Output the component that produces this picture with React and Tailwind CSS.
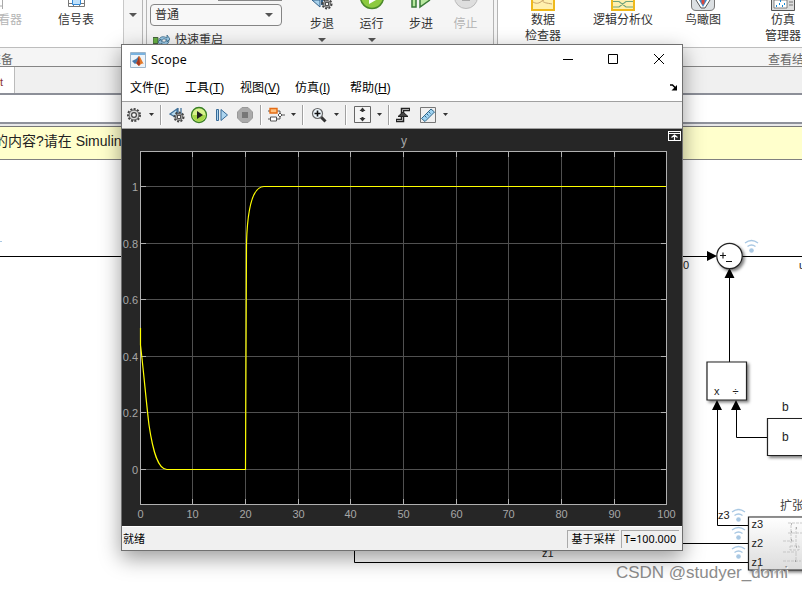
/**
 * Simulink editor with a floating Scope window
 */
import React from 'react';

const X_TICKS = [0, 10, 20, 30, 40, 50, 60, 70, 80, 90, 100];
const X_POS = [140, 192, 245, 298, 350, 403, 456, 508, 561, 614, 666];
const Y_TICKS = [
  { label: '1', y: 186 },
  { label: '0.8', y: 243 },
  { label: '0.6', y: 299 },
  { label: '0.4', y: 356 },
  { label: '0.2', y: 412 },
  { label: '0', y: 469 },
];

const MENUS = [
  { label: '文件', key: 'F' },
  { label: '工具', key: 'T' },
  { label: '视图', key: 'V' },
  { label: '仿真', key: 'I' },
  { label: '帮助', key: 'H' },
];

function Caret({ className = '' }) {
  return (
    <svg width="8" height="4" viewBox="0 0 8 4" className={className}>
      <path d="M0 0h8L4 4z" fill="#555" />
    </svg>
  );
}

function MiniCaret({ className = '' }) {
  return (
    <svg width="5" height="3" viewBox="0 0 5 3" className={className}>
      <path d="M0 0h5L2.5 3z" fill="#333" />
    </svg>
  );
}

function Gear({ cx, cy, r }) {
  return (
    <g>
      <circle cx={cx} cy={cy} r={r} fill="none" stroke="#444" strokeWidth="2" strokeDasharray="2 1.4" />
      <circle cx={cx} cy={cy} r={r - 1} fill="#d5d5d5" stroke="#555" strokeWidth="1" />
      <circle cx={cx} cy={cy} r={r * 0.4} fill="#f8f8f8" stroke="#444" strokeWidth="1.2" />
    </g>
  );
}

function SignalTableIcon() {
  return (
    <svg width="17" height="7" viewBox="0 0 17 7">
      <path d="M.5 0v6.500h16V0M0 3.500h17M5.500 0v7M11.500 0v7" fill="#fff" stroke="#777" />
      <path d="M4.500 0v4.500h8V0" fill="#bfe0fa" stroke="#3389d6" />
    </svg>
  );
}

function StepBackIcon() {
  return (
    <svg width="22" height="10" viewBox="0 0 22 10">
      <path d="M1 0l8 7V0z" fill="#a8d2ed" stroke="#35638a" />
      <path d="M11 0v5" stroke="#35638a" strokeWidth="2" />
      <Gear cx={16} cy={4} r={4.5} />
    </svg>
  );
}

function RunIcon() {
  return (
    <svg width="24" height="10" viewBox="0 0 24 10">
      <circle cx="12" cy="-3" r="11.500" fill="#8dca3f" stroke="#4b882b" strokeWidth="1.500" />
      <path d="M9 0v4l7-4z" fill="#fff" />
    </svg>
  );
}

function StepForwardIcon() {
  return (
    <svg width="22" height="10" viewBox="0 0 22 10">
      <path d="M2 0v7h4V0M10 0v7l10-7" fill="#b9e8a0" stroke="#397a37" strokeWidth="1.500" />
    </svg>
  );
}

function StopIcon() {
  return (
    <svg width="24" height="10" viewBox="0 0 24 10">
      <circle cx="12" cy="-3" r="11.500" fill="#dedede" stroke="#bbb" />
      <path d="M8 0h8" stroke="#aaa" strokeWidth="2" />
    </svg>
  );
}

function InspectorIcon() {
  return (
    <svg width="24" height="11" viewBox="0 0 24 11">
      <path d="M1 0v10h22V0" fill="#fff0ae" stroke="#efb91c" strokeWidth="2" />
      <path d="M2 2c5 3 7 0 11-2M11 0c1 3 5 3 10 4" fill="none" stroke="#c8a46c" />
    </svg>
  );
}

function AnalyzerIcon() {
  return (
    <svg width="24" height="11" viewBox="0 0 24 11">
      <path d="M1 0v10h22V0" fill="#fff0ae" stroke="#efb91c" strokeWidth="2" />
      <path d="M2 1.500h6L15 7h7M2 7h6l7-5.500h7" fill="none" stroke="#71a37b" strokeWidth="1.200" />
    </svg>
  );
}

function BirdIcon() {
  return (
    <svg width="24" height="11" viewBox="0 0 24 11">
      <path d="M.5 0v6q0 4.500 4.500 4.500h14q4.500 0 4.500-4.500V0" fill="#dce0e3" stroke="#777" />
      <path d="M5 0l5 8h4l5-8" fill="#fff" stroke="#555" />
      <path d="M8 0l4 7 4-7" fill="#3d8ccb" />
      <path d="M10.500 0h3v3L12 5l-1.500-2z" fill="#d7483e" />
    </svg>
  );
}

function ManagerIcon() {
  return (
    <svg width="24" height="11" viewBox="0 0 24 11">
      <path d="M.5 0v10.500h23V0" fill="#ddd" stroke="#555" />
      <path d="M3 0h13v8H3z" fill="#fff" stroke="#555" strokeWidth=".7" />
      <path d="M5 6h1M8 4h1M11 6h1M13 4h1M9 1h1" stroke="#1688d6" strokeWidth="2" />
      <path d="M18 2h4M18 5h4" stroke="#777" />
    </svg>
  );
}

const RUN_BUTTONS = [
  { label: '步退', Icon: StepBackIcon, caret: true, cls: 'w-[50px] text-[#333]' },
  { label: '运行', Icon: RunIcon, caret: true, cls: 'w-[49px] text-[#333]' },
  { label: '步进', Icon: StepForwardIcon, cls: 'w-[50px] text-[#333]' },
  { label: '停止', Icon: StopIcon, cls: 'w-[39px] text-[#b5b5b5]' },
];

const RESULT_BUTTONS = [
  { lines: ['数据', '检查器'], Icon: InspectorIcon },
  { lines: ['逻辑分析仪'], Icon: AnalyzerIcon },
  { lines: ['鸟瞰图'], Icon: BirdIcon },
  { lines: ['仿真', '管理器'], Icon: ManagerIcon },
];

function Ribbon() {
  return (
    <div className="h-[67px] shrink-0 border-b border-[#858585] bg-[#f5f5f5] text-xs leading-4 text-[#333]">
      <div className="flex h-[48px] border-b border-[#bdbdbd] whitespace-nowrap">
        <div className="flex w-[124px] shrink-0 border-r border-[#c8c8c8] bg-white">
          <div className="w-[36px] text-[#b5b5b5]">
            <svg width="8" height="12" viewBox="0 0 8 12">
              <path d="M2.500 0v9M0 6h3" stroke="#aaa" />
            </svg>
            <div className="-ml-[2px]">看器</div>
          </div>
          <div className="flex w-[80px] flex-col items-center">
            <div className="h-[12px]"><SignalTableIcon /></div>
            <span>信号表</span>
          </div>
        </div>
        <div className="flex w-[19px] shrink-0 justify-center border-r border-[#b5b5b5] pt-[13px]">
          <Caret />
        </div>
        <div className="w-[4px] shrink-0 border-r border-[#b5b5b5]" />

        {/* Simulate */}
        <div className="flex w-[347px] shrink-0 border-r border-[#b5b5b5]">
          <div className="w-[150px] pl-[3px]">
            <div className="ml-[68px] h-px w-[64px] bg-[#888]" />
            <div className="mt-[3px] flex h-[22px] w-[132px] items-center justify-between rounded-[4px] border border-[#858585] bg-[#f8f8f8] pr-2 pl-1">
              <span>普通</span>
              <Caret />
            </div>
            <div className="mt-[6px] flex items-center gap-[5px] pl-[3px]">
              <svg width="17" height="13" viewBox="0 0 17 13">
                <path d="M0 3.500h5v6H0z" fill="#68b345" stroke="#47643d" />
                <path d="M6 7c0-5 5-5 8-3V1l3 4-3 3V6c-3-2-5-1-5 1M16 6c0 5-5 6-8 3v3L5 8l3-3v2c3 2 5 1 5-1" fill="#9ccbe9" stroke="#376787" strokeWidth=".8" />
              </svg>
              <span>快速重启</span>
            </div>
          </div>
          {RUN_BUTTONS.map(({ label, Icon, caret, cls }) => (
            <div key={label} className={`flex flex-col items-center ${cls}`}>
              <div className="h-[16px]"><Icon /></div>
              <span>{label}</span>
              {caret && <Caret className="mt-[6px]" />}
            </div>
          ))}
        </div>
        <div className="w-[4px] shrink-0 border-r border-[#b5b5b5]" />

        {/* Review results */}
        <div className="flex grow bg-white pl-[5px]">
          {RESULT_BUTTONS.map(({ lines, Icon }) => (
            <div key={lines[0]} className="flex w-[80px] shrink-0 flex-col items-center">
              <div className="h-[12px]"><Icon /></div>
              {lines.map((line) => <span key={line}>{line}</span>)}
            </div>
          ))}
        </div>
      </div>
      <div className="flex h-[18px] items-center justify-between pt-[6px] whitespace-nowrap text-[#666]">
        <span className="-ml-[11px]">准备</span>
        <span className="-mr-[14px]">查看结果</span>
      </div>
    </div>
  );
}

function Wifi({ x, y }) {
  return (
    <g transform={`translate(${x} ${y})`} fill="none" stroke="#a9c8e3" strokeWidth="1.300">
      <path d="M-6.500 3Q0-2 6.500 3M-4 6.500q4-3 8 0" />
      <circle cx="0" cy="10.500" r="2.300" fill="#a9c8e3" stroke="none" />
    </g>
  );
}

function Diagram() {
  return (
    <svg
      width="802"
      height="431"
      viewBox="0 160 802 431"
      className="block font-['Liberation_Sans','Noto_Sans_CJK_SC',sans-serif] text-[11px]"
    >
      <defs>
        <linearGradient id="block" x1="0" y1="0" x2="0" y2="1">
          <stop offset="0" stopColor="#fff" />
          <stop offset="1" stopColor="#dcdcdc" />
        </linearGradient>
        <filter id="drop" x="-20%" y="-20%" width="150%" height="150%">
          <feDropShadow dx="2" dy="2" stdDeviation="1.500" floodOpacity=".5" />
        </filter>
      </defs>
      <path d="M0 241.500h2" stroke="#a9c8e3" />
      <g fill="none" stroke="#000">
        <path d="M0 256.500h710M742 256.500h60M729.500 362v-85" />
        <path d="M354.500 540v22.500H748M682 543.500h66M748 525.500h-30.500V409M767 437.500h-30.500V409" />
      </g>
      <path d="M707 251v10l10-5zM729.500 268l-5 10h10zM717 400l-5 10h10zM736 400l-5 10h10z" />
      <g fill="#fff" stroke="#222" strokeWidth="1.200" filter="url(#drop)">
        <circle cx="729.500" cy="256" r="12.700" />
        <path d="M707 362h39.500v38H707z" />
        <path d="M767.500 418.500H810v37h-42.500z" />
        <path d="M748.500 517H810v53h-61.500z" fill="url(#block)" />
      </g>
      <path d="M720 255.500h6M723 252.500v6M726 261.500h6" stroke="#111" strokeWidth="1.100" />
      <g fill="none" stroke="#b8b8b8" strokeWidth=".7">
        <path d="M788 523h14M791 525v18M788 533h14M783 541h12M796 527v20M783 552h14M790 546h9v4h-9zM796 553v9M783 561h18" strokeDasharray="3 1" />
      </g>
      <path d="M791 524h1M791 532h1M791 540h1M796 528h1M796 547h1M795 561h1" stroke="#777" />
      <g fill="#222">
        <text x="683" y="269">0</text>
        <text x="799" y="269">u</text>
        <text x="714" y="395">x</text>
        <text x="732.500" y="395">÷</text>
        <text x="782" y="411" className="text-xs">b</text>
        <text x="782" y="441" className="text-xs">b</text>
        <text x="780" y="510" fill="#444" className="text-xs">扩张</text>
        <text x="718" y="519">z3</text>
        <text x="751.500" y="528">z3</text>
        <text x="751.500" y="547">z2</text>
        <text x="751.500" y="566">z1</text>
        <text x="542" y="557">z1</text>
      </g>
      <Wifi x={751.5} y={240} />
      <Wifi x={738.5} y={509} />
      <Wifi x={738.5} y={527} />
      <Wifi x={738.5} y={546} />
      <text x="616" y="578" textLength="172" fill="#8c8c8c" className="text-[17px] text-shadow-[1px_1px_0_#fff]">CSDN @studyer_domi</text>
    </svg>
  );
}

function TitleBar() {
  return (
    <div className="flex h-[30px] shrink-0 items-center pl-2">
      <svg width="16" height="16" viewBox="0 0 16 16">
        <path d="M.5.500h15v15H.500z" fill="#edf4fa" stroke="#9cb5ca" />
        <path d="M1 1h14v2H1z" fill="#79b2df" />
        <path d="M2 9l4-2 3-3-1 6-3 2z" fill="#4779aa" />
        <path d="M9 4c2 1 3 6 5 8-2-1-3 0-5 2l-3-3c2-1 2-5 3-7z" fill="#e47928" />
        <path d="M9 4l1 8-1 2-3-3c2-1 2-5 3-7z" fill="#a53720" />
      </svg>
      <span className="ml-[5px] font-['Open_Sans',sans-serif] text-[12.5px] tracking-[0.2px] text-black">Scope</span>
      <svg width="102" height="12" viewBox="0 0 102 12" className="mr-[17px] mb-[2px] ml-auto" fill="none" stroke="#000" strokeWidth="1">
        <path d="M0 6.500h10M45.500 1.500h9v9h-9zM91 1l10 10M101 1L91 11" />
      </svg>
    </div>
  );
}

function MenuBar() {
  return (
    <div className="flex h-[27px] shrink-0 items-center border-b border-[#a0a0a0] px-2 pb-px text-xs text-black">
      {MENUS.map((m) => (
        <span key={m.key} className="w-[55px] whitespace-nowrap">
          {m.label}(<span className="underline">{m.key}</span>)
        </span>
      ))}
      <svg width="8" height="7" viewBox="0 0 8 7" className="-mr-[4px] ml-auto">
        <path d="M0 1h2.500l3 3" fill="none" stroke="#000" strokeWidth="1.500" />
        <path d="M7 1v5.500H1.500z" fill="#000" />
      </svg>
    </div>
  );
}

function Separator({ className = '' }) {
  return <div className={`h-[20px] w-[2px] shrink-0 border-r border-white bg-[#a0a0a0] ${className}`} />;
}

function Toolbar() {
  return (
    <div className="flex h-[27px] shrink-0 items-center border-b border-[#a0a0a0] bg-[#f0f0f0] pb-px pl-1">
      <svg width="16" height="16" viewBox="0 0 16 16">
        <Gear cx={8} cy={8} r={6} />
      </svg>
      <MiniCaret className="ml-[7px]" />
      <Separator className="ml-[6px]" />
      <svg width="16" height="16" viewBox="0 0 16 16" className="ml-[7px]">
        <path d="M1 7l7-5v9zM9 1v7M12 1v7" fill="#b8dbef" stroke="#42729a" strokeWidth="1.300" />
        <Gear cx={10} cy={10} r={4.5} />
      </svg>
      <svg width="18" height="18" viewBox="0 0 18 18" className="ml-[5px]">
        <circle cx="9" cy="9" r="7.500" fill="#d7f38b" stroke="#397f25" strokeWidth="1.300" />
        <path d="M2.500 9a6.500 6.500 0 0013 0z" fill="#a5d848" />
        <path d="M7 5v8l6-4z" fill="#222" />
      </svg>
      <svg width="14" height="16" viewBox="0 0 14 16" className="ml-[7px]">
        <path d="M1.500 2.500h2v11h-2zM6 2.500v11L12.500 8z" fill="#add5ef" stroke="#376a97" />
      </svg>
      <svg width="16" height="16" viewBox="0 0 16 16" className="ml-2">
        <path d="M5 .5h6L15.500 5v6L11 15.500H5L.5 11V5z" fill="#aaa" stroke="#999" />
        <path d="M5 5h6v6H5z" fill="#777" />
      </svg>
      <Separator className="ml-[7px]" />
      <svg width="17" height="16" viewBox="0 0 17 16" className="ml-[6px]">
        <path d="M0 4h12v4M0 12h12V9M14 8h3" fill="none" stroke="#555" />
        <path d="M2 1.500h7v4.500H2z" fill="#ffc07c" stroke="#e46c15" strokeWidth="1.400" />
        <path d="M2.500 10h6v4h-6zM10 8l2-2 2 2-2 2z" fill="#fff" stroke="#555" />
      </svg>
      <MiniCaret className="ml-[6px]" />
      <Separator className="ml-[6px]" />
      <svg width="16" height="16" viewBox="0 0 16 16" className="ml-[7px]">
        <path d="M10 10l4.500 4.500" stroke="#333" strokeWidth="3" />
        <circle cx="6.500" cy="6.500" r="5" fill="#edf6fc" stroke="#666" strokeWidth="1.200" />
        <path d="M3.500 6.500h6M6.500 3.500v6" stroke="#111" strokeWidth="1.600" />
      </svg>
      <MiniCaret className="ml-[7px]" />
      <Separator className="ml-[6px]" />
      <svg width="17" height="17" viewBox="0 0 17 17" className="ml-[7px]">
        <path d="M.5.500h16v16H.500z" fill="#f4f4f4" stroke="#666" />
        <path d="M8.500 1.500l3 3.500h-6zM8.500 15.500l3-3.500h-6z" fill="#333" />
        <path d="M8.500 4v2M8.500 11v2" stroke="#333" strokeWidth="2" />
      </svg>
      <MiniCaret className="ml-[6px]" />
      <Separator className="ml-[6px]" />
      <svg width="14" height="16" viewBox="0 0 14 16" className="ml-[6px]">
        <path d="M0 13.500h6.500V2.500H14" fill="none" stroke="#222" strokeWidth="3.500" />
        <path d="M1 13.500h5.500V2.500H13" fill="none" stroke="#aaa" />
        <path d="M2 9.500L7 5l5 4.500z" fill="#444" stroke="#222" />
      </svg>
      <svg width="16" height="16" viewBox="0 0 16 16" className="ml-[10px]">
        <path d="M.5.500h15v15H.500z" fill="#f0f0f0" stroke="#777" />
        <path d="M1.500 11.500L11 2l3.500 3-9.500 9.500z" fill="#9ed2f1" stroke="#316789" />
        <path d="M5 9l1.500 1.500M7 7l1.500 1.500M9 5l1.500 1.500" stroke="#316789" />
      </svg>
      <MiniCaret className="ml-[7px]" />
    </div>
  );
}

function Plot() {
  return (
    <svg
      width="560"
      height="397"
      viewBox="122 129 560 397"
      className="block shrink-0 bg-[#262626] font-['Liberation_Sans',sans-serif] text-[11px]"
    >
      <rect x="140.500" y="151.500" width="526" height="353" fill="#000" />
      <g stroke="#505050">
        {X_POS.slice(1, -1).map((x) => (
          <path key={x} d={`M${x + 0.5} 152V504`} />
        ))}
        {Y_TICKS.map((t) => (
          <path key={t.label} d={`M141 ${t.y + 0.5}H666`} />
        ))}
      </g>
      {/* axis ticks and frame */}
      <g stroke="#b0b0b0" fill="none">
        {X_POS.map((x) => (
          <path key={x} d={`M${x + 0.5} 152v5M${x + 0.5} 504v-5`} />
        ))}
        {Y_TICKS.map((t) => (
          <path key={t.label} d={`M141 ${t.y + 0.5}h5M666 ${t.y + 0.5}h-5`} />
        ))}
        <rect x="140.500" y="151.500" width="526" height="353" />
      </g>
      <g fill="#a6a6a6">
        {X_TICKS.map((v, i) => (
          <text key={v} x={X_POS[i] + 0.5} y="518" textAnchor="middle">{v}</text>
        ))}
        {Y_TICKS.map((t) => (
          <text key={t.label} x="138" y={t.y + 4.5} textAnchor="end">{t.label}</text>
        ))}
        <text x="404" y="145" textAnchor="middle" className="text-xs">y</text>
      </g>
      <path
        d="M140.500 328V345C144 375 146 400 149 425C153 452 158 469.500 167 469.500H245.500L246.500 243C247.500 208 253 186.500 264 186.500H666"
        fill="none"
        stroke="#ffff00"
        strokeWidth="1.200"
      />
      <g fill="none" stroke="#fff">
        <rect x="668.500" y="131.500" width="12" height="9" />
        <path d="M669 133.500h11M674.500 140v-5M671.500 137.500l3-2.500 3 2.500" strokeWidth="1.200" />
      </g>
    </svg>
  );
}

function StatusBar() {
  return (
    <div className="flex grow items-center gap-[2px] border-t border-white bg-[#f0f0f0] pt-px pr-[3px] pl-[1px] text-[11px] whitespace-nowrap text-black">
      <span className="mr-auto">就绪</span>
      <span className="flex h-[18px] w-[52px] items-center justify-center border-t border-l border-[#aaa]">基于采样</span>
      <span className="flex h-[18px] w-[58px] items-center border-t border-l border-[#aaa] pl-[2px] font-['Noto_Sans',sans-serif] text-[10.8px]">T=100.000</span>
    </div>
  );
}

export default function App() {
  return (
    <div className="relative flex h-[591px] w-[802px] flex-col overflow-hidden bg-white font-['Liberation_Sans','Noto_Sans_CJK_SC',sans-serif]">
      <Ribbon />
      <div className="flex h-[28px] shrink-0 border-b-2 border-[#8c8f98] bg-[#f0f0f0]">
        <div className="flex w-[15px] items-center border-r border-[#bbb] bg-white pt-[4px] text-[11px] text-[#833]">t</div>
      </div>
      <div className="h-[29px] shrink-0 border-b-2 border-[#8f929b] bg-white" />
      <div className="h-[3px] shrink-0 border-b border-[#777] bg-[#e8e8e8]" />
      <div className="flex h-[33px] shrink-0 items-center border-b border-[#808080] bg-[#ffffcc] text-sm text-[#222]">
        <span className="-ml-[6px] pb-[5px] whitespace-nowrap">的内容?请在 Simulink</span>
      </div>
      <Diagram />

      {/* Scope window */}
      <div className="absolute top-[44px] left-[121px] flex h-[507px] w-[562px] flex-col border border-[#707070] bg-white shadow-[0_7px_20px_rgba(0,0,0,0.4)]">
        <TitleBar />
        <MenuBar />
        <Toolbar />
        <Plot />
        <StatusBar />
      </div>
    </div>
  );
}
